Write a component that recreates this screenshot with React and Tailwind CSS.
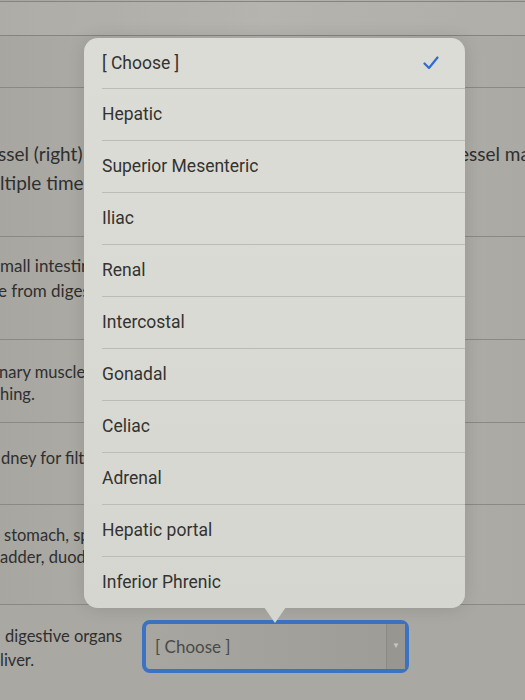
import React from "react";

const items = [
  "Hepatic",
  "Superior Mesenteric",
  "Iliac",
  "Renal",
  "Intercostal",
  "Gonadal",
  "Celiac",
  "Adrenal",
  "Hepatic portal",
  "Inferior Phrenic",
];

export default function App() {
  return (
    <div
      className="relative w-[525px] h-[700px] overflow-hidden bg-gradient-to-r from-[#a7a6a1] via-[#b3b2ad] to-[#aaa9a4] text-[#2f2f2f] text-[17px]"
      style={{ fontFamily: "Lato, 'Open Sans', sans-serif" }}
    >
      {/* background rows */}
      <div className="h-[2px] border-b border-[#85847f]" />
      <div className="h-[34px] border-b border-[#85847f] bg-[#b8b7b2]/40" />
      <div className="h-[52px] border-b border-[#8a8984]" />
      <div className="relative h-[149px] border-b border-[#8a8984]">
        <div className="pt-[51px] leading-[29px] whitespace-nowrap text-[19px]">
          <div className="-ml-[2px]">ssel (right)</div>
          <div>ltiple time</div>
        </div>
        <div className="absolute left-[459px] top-[51px] leading-[29px] whitespace-nowrap text-[19px]">essel ma</div>
      </div>
      <div className="h-[103px] border-b border-[#8a8984]">
        <div className="pt-[16px] leading-[25px] whitespace-nowrap text-[17px]">
          <div>mall intestin</div>
          <div className="-ml-[2px]">e from diges</div>
        </div>
      </div>
      <div className="h-[83px] border-b border-[#8a8984]">
        <div className="pt-[21px] leading-[22px] whitespace-nowrap text-[16.5px]">
          <div className="-ml-[1px]">nary muscle</div>
          <div>hing.</div>
        </div>
      </div>
      <div className="h-[82px] border-b border-[#8a8984]">
        <div className="pt-[24px] leading-[22px] whitespace-nowrap text-[16.5px]">
          <div className="ml-[1px]">dney for filt</div>
        </div>
      </div>
      <div className="h-[100px] border-b border-[#8a8984]">
        <div className="pt-[19px] leading-[22px] whitespace-nowrap text-[16.5px]">
          <div className="ml-[4px]">stomach, sp</div>
          <div>adder, duod</div>
        </div>
      </div>
      <div className="flex items-start h-[95px] bg-[#a9a8a3]">
        <div className="w-[142px] shrink-0 pt-[19px] leading-[24px] whitespace-nowrap text-[16.5px]">
          <div className="ml-[5px]">digestive organs</div>
          <div>liver.</div>
        </div>
        <div className="mt-[15px] w-[267px] h-[53px] rounded-[8px] border-[4px] border-[#3c72c2] bg-gradient-to-r from-[#a7a6a1] to-[#9d9c97] flex items-stretch">
          <div className="flex-1 flex items-center pl-[9px] text-[17px] text-[#4a4a48]">[ Choose ]</div>
          <div className="w-[19px] bg-[#979691] border-l border-[#8a8984] flex items-center justify-center">
            <span className="text-[8px] text-[#c6c6c2] -mt-[4px]">▼</span>
          </div>
        </div>
      </div>

      {/* popover */}
      <div
        className="absolute left-[84px] top-[38px] w-[381px] rounded-[14px] bg-gradient-to-b from-[#dcdcd6] via-[#dadad4] to-[#d6d6d0] shadow-[0_0_18px_rgba(0,0,0,0.12)] text-[17.5px] text-[#333331]"
        style={{ fontFamily: "Roboto, 'Open Sans', sans-serif" }}
      >
        <div className="h-[50px] flex items-center justify-between pl-[18px] pr-[26px]">
          <span>[ Choose ]</span>
          <svg width="16" height="14" viewBox="0 0 16 14" fill="none">
            <path d="M1.5 7.5 L6 12 L14.5 1.5" stroke="#2f6bd0" strokeWidth="2.2" strokeLinecap="round" strokeLinejoin="round" />
          </svg>
        </div>
        {items.map((t) => (
          <div key={t} className="ml-[18px] border-t border-[#bcbcb6] h-[52px] flex items-center">
            {t}
          </div>
        ))}
        <div className="absolute left-[180px] -bottom-[15px] w-0 h-0 border-l-[11px] border-r-[11px] border-t-[16px] border-l-transparent border-r-transparent border-t-[#d6d6d0]" />
      </div>
    </div>
  );
}
